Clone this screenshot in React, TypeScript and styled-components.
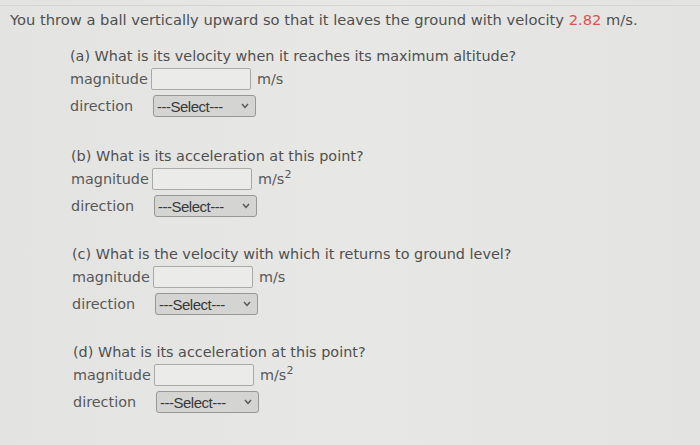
import React from "react";
import styled, { createGlobalStyle } from "styled-components";

const GlobalStyle = createGlobalStyle`
  html, body {
    margin: 0;
    padding: 0;
    background: #e5e6e4;
  }
`;

const Page = styled.div`
  width: 700px;
  height: 445px;
  overflow: hidden;
  background: linear-gradient(90deg, #e3e4e2 0%, #e7e8e6 50%, #e3e4e2 100%);
  font-family: "DejaVu Sans", Verdana, sans-serif;
  color: #4f4f4f;
`;

const TopLine = styled.div`
  height: 5px;
  border-bottom: 1px solid #d4d5d3;
`;

const Title = styled.div`
  margin-top: 4px;
  padding-left: 10px;
  height: 20px;
  line-height: 20px;
  font-size: 14.7px;
  white-space: nowrap;
`;

const Value = styled.span`
  color: #d9534f;
`;

const Part = styled.div<{ $indent: number; $top: number }>`
  margin-top: ${(p) => p.$top}px;
  padding-left: ${(p) => 70 + p.$indent}px;
  display: flex;
  flex-direction: column;
`;

const Question = styled.div`
  height: 22px;
  line-height: 22px;
  font-size: 14.4px;
  white-space: nowrap;
  margin-bottom: 1px;
`;

const Row = styled.div<{ $gap?: number }>`
  display: flex;
  align-items: center;
  height: 22px;
  margin-top: ${(p) => p.$gap ?? 0}px;
`;

const Label = styled.span`
  width: 81px;
  font-size: 14.4px;
  color: #585858;
  white-space: nowrap;
`;

const Input = styled.div`
  width: 98px;
  height: 20px;
  border: 1px solid #a9aaa8;
  border-radius: 2px;
  background: #ebecea;
`;

const Unit = styled.span`
  margin-left: 6px;
  font-size: 14.4px;
  color: #585858;
`;

const Sup = styled.sup`
  font-size: 11px;
  vertical-align: 6px;
  line-height: 0;
`;

const Select = styled.div`
  margin-left: 2px;
  width: 92px;
  height: 20px;
  box-sizing: content-box;
  border: 1px solid #979896;
  border-radius: 3px;
  background: #d4d5d3;
  display: flex;
  align-items: center;
  justify-content: space-between;
  padding: 0 6px 0 3px;
  font-family: "Liberation Sans", Arial, sans-serif;
  font-size: 15px;
  color: #383838;
  letter-spacing: -0.5px;
`;

const Chevron = () => (
  <svg width="8" height="6" viewBox="0 0 8 6">
    <polyline points="1,1 4,4.5 7,1" fill="none" stroke="#555" strokeWidth="1.4" />
  </svg>
);

type PartData = { q: string; unit: "v" | "a"; indent: number; top: number };

const parts: PartData[] = [
  { q: "(a) What is its velocity when it reaches its maximum altitude?", unit: "v", indent: 0, top: 15 },
  { q: "(b) What is its acceleration at this point?", unit: "a", indent: 1, top: 28 },
  { q: "(c) What is the velocity with which it returns to ground level?", unit: "v", indent: 2, top: 26 },
  { q: "(d) What is its acceleration at this point?", unit: "a", indent: 3, top: 26 },
];

export default function App() {
  return (
    <Page>
      <GlobalStyle />
      <TopLine />
      <Title>
        You throw a ball vertically upward so that it leaves the ground with velocity <Value>2.82</Value> m/s.
      </Title>
      {parts.map((p, i) => (
        <Part key={i} $indent={p.indent} $top={p.top}>
          <Question>{p.q}</Question>
          <Row>
            <Label>magnitude</Label>
            <Input />
            <Unit>
              {p.unit === "v" ? "m/s" : <>m/s<Sup>2</Sup></>}
            </Unit>
          </Row>
          <Row $gap={5}>
            <Label>direction</Label>
            <Select>
              <span>---Select---</span>
              <Chevron />
            </Select>
          </Row>
        </Part>
      ))}
    </Page>
  );
}
